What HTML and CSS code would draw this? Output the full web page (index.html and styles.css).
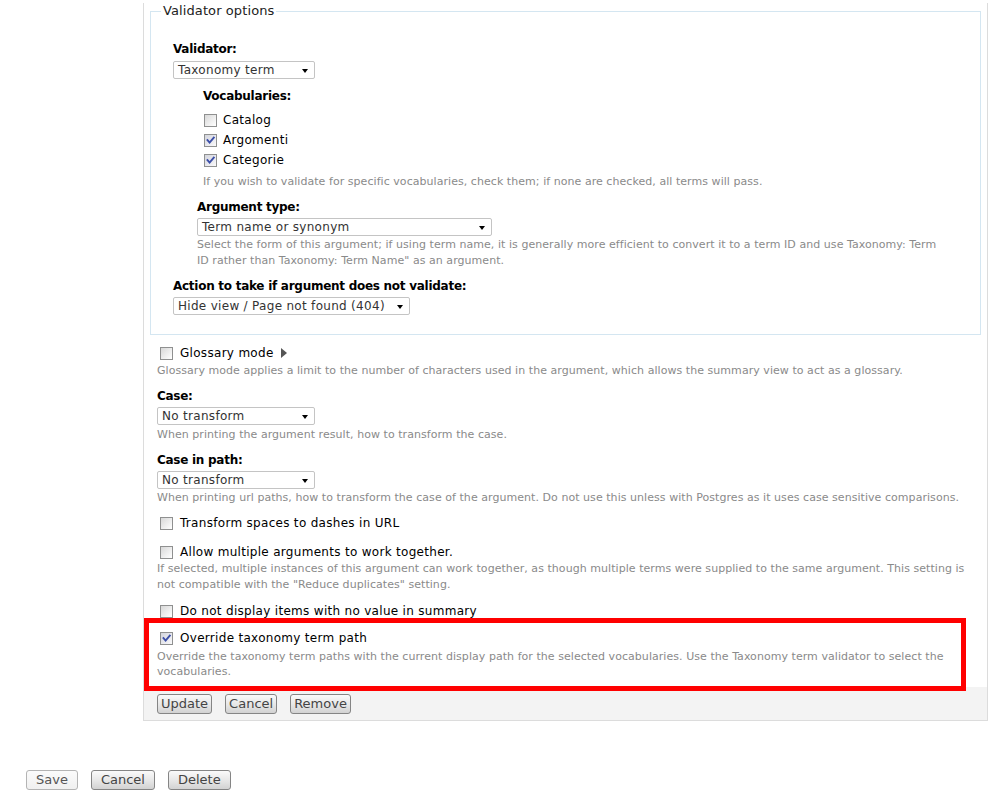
FILE: index.html
```html
<!DOCTYPE html>
<html lang="en">
<head>
<meta charset="utf-8">
<title>Argument options</title>
<link rel="stylesheet" href="styles.css">
</head>
<body>
<div class="panel">
  <div class="panel-body">
    <fieldset class="validator-fs">
      <legend>Validator options</legend>
      <div class="fs-body">
        <div class="form-item">
          <div class="label">Validator:</div>
          <div class="select w-validator"><span>Taxonomy term</span><i class="caret"></i></div>
        </div>
        <div class="vocab">
          <div class="label">Vocabularies:</div>
          <div class="cb-list">
            <div class="cb-row"><span class="cb"></span><span class="cb-label">Catalog</span></div>
            <div class="cb-row"><span class="cb checked"><svg viewBox="0 0 11 11" width="11" height="11"><path d="M2.5 5.2 L4.6 7.6 L8.8 2.6" /></svg></span><span class="cb-label">Argomenti</span></div>
            <div class="cb-row"><span class="cb checked"><svg viewBox="0 0 11 11" width="11" height="11"><path d="M2.5 5.2 L4.6 7.6 L8.8 2.6" /></svg></span><span class="cb-label">Categorie</span></div>
          </div>
          <div class="desc vocab-desc">If you wish to validate for specific vocabularies, check them; if none are checked, all terms will pass.</div>
        </div>
        <div class="argtype">
          <div class="label">Argument type:</div>
          <div class="select w-argtype"><span>Term name or synonym</span><i class="caret"></i></div>
          <div class="desc argtype-desc">Select the form of this argument; if using term name, it is generally more efficient to convert it to a term ID and use Taxonomy: Term ID rather than Taxonomy: Term Name" as an argument.</div>
        </div>
        <div class="form-item action">
          <div class="label">Action to take if argument does not validate:</div>
          <div class="select w-action"><span>Hide view / Page not found (404)</span><i class="caret"></i></div>
        </div>
      </div>
    </fieldset>

    <div class="options">
      <div class="cb-item glossary">
        <div class="cb-row"><span class="cb"></span><span class="cb-label">Glossary mode</span><i class="expand"></i></div>
        <div class="desc">Glossary mode applies a limit to the number of characters used in the argument, which allows the summary view to act as a glossary.</div>
      </div>
      <div class="sel-item case">
        <div class="label">Case:</div>
        <div class="select w-case"><span>No transform</span><i class="caret"></i></div>
        <div class="desc">When printing the argument result, how to transform the case.</div>
      </div>
      <div class="sel-item casepath">
        <div class="label">Case in path:</div>
        <div class="select w-case"><span>No transform</span><i class="caret"></i></div>
        <div class="desc">When printing url paths, how to transform the case of the argument. Do not use this unless with Postgres as it uses case sensitive comparisons.</div>
      </div>
      <div class="cb-item transform">
        <div class="cb-row"><span class="cb"></span><span class="cb-label">Transform spaces to dashes in URL</span></div>
      </div>
      <div class="cb-item multiple">
        <div class="cb-row"><span class="cb"></span><span class="cb-label">Allow multiple arguments to work together.</span></div>
        <div class="desc">If selected, multiple instances of this argument can work together, as though multiple terms were supplied to the same argument. This setting is not compatible with the "Reduce duplicates" setting.</div>
      </div>
      <div class="cb-item novalue">
        <div class="cb-row"><span class="cb"></span><span class="cb-label">Do not display items with no value in summary</span></div>
      </div>
      <div class="cb-item override">
        <div class="highlight"></div>
        <div class="cb-row"><span class="cb checked"><svg viewBox="0 0 11 11" width="11" height="11"><path d="M2.5 5.2 L4.6 7.6 L8.8 2.6" /></svg></span><span class="cb-label">Override taxonomy term path</span></div>
        <div class="desc tight">Override the taxonomy term paths with the current display path for the selected vocabularies. Use the Taxonomy term validator to select the vocabularies.</div>
      </div>
    </div>
  </div>
  <div class="panel-actions">
    <button class="btn small">Update</button>
    <button class="btn small">Cancel</button>
    <button class="btn small">Remove</button>
  </div>
</div>

<div class="page-actions">
  <button class="btn big light">Save</button>
  <button class="btn big">Cancel</button>
  <button class="btn big">Delete</button>
</div>
</body>
</html>
```

FILE: styles.css
```css
* { box-sizing: border-box; }

body {
  margin: 0;
  font-family: "DejaVu Sans", Verdana, sans-serif;
  font-size: 12px;
  color: #000;
  background: #fff;
}

.panel {
  margin-left: 143px;
  width: 845px;
  border: 1px solid #dcdcdc;
  border-top: 0;
  background: #fff;
}

.panel-body {
  padding: 0 6px;
}

/* fieldset */
.validator-fs {
  margin: 3px 0 0 0;
  padding: 0;
  border: 1px solid #d4e6f1;
  min-width: 0;
}

.validator-fs legend {
  margin-left: 10px;
  padding: 0 2px;
  font-size: 13px;
  line-height: 16px;
  color: #222;
  letter-spacing: 0.1px;
}

.fs-body {
  padding: 22px 32px 19px 22px;
}

.label {
  font-weight: bold;
  line-height: 16px;
  font-size: 12px;
  letter-spacing: -0.27px;
}

.select {
  display: flex;
  align-items: center;
  justify-content: space-between;
  height: 18px;
  margin-top: 4px;
  padding: 0 6px 0 4px;
  border: 1px solid #c4c4c4;
  border-radius: 2px;
  background: #fff;
  color: #333;
  font-size: 12px;
  line-height: 16px;
  letter-spacing: 0.3px;
  white-space: nowrap;
}

.caret {
  width: 0;
  height: 0;
  border-left: 3px solid transparent;
  border-right: 3px solid transparent;
  border-top: 4px solid #000;
  margin-top: 1px;
}

.w-validator { width: 142px; }
.w-argtype { width: 295px; margin-top: 3px; }
.w-action { width: 237px; margin-top: 3px; }
.w-case { width: 158px; margin-top: 3px; }

.desc {
  color: #8a8a8a;
  font-size: 11px;
  letter-spacing: 0.05px;
  line-height: 16px;
}

.desc.tight { line-height: 15px; margin-top: 3px; }

.vocab {
  margin: 9px 0 0 30px;
}

.cb-list {
  margin-top: 6px;
}

.cb-row {
  display: flex;
  align-items: center;
  height: 20px;
}

.cb {
  flex: none;
  width: 13px;
  height: 13px;
  margin-left: 1px;
  margin-right: 6px;
  border: 1px solid #8f9090;
  background: linear-gradient(135deg, #d8d8d8 0%, #f4f4f4 70%, #fff 100%);
  display: flex;
  align-items: center;
  justify-content: center;
}

.cb.checked {
  background: linear-gradient(135deg, #d2d4dc 0%, #eeeef2 70%, #fafafa 100%);
}

.cb svg path {
  fill: none;
  stroke: #3c4fa8;
  stroke-width: 1.9;
  stroke-linecap: square;
}

.cb-label {
  line-height: 16px;
  letter-spacing: 0.3px;
}

.vocab-desc {
  margin-top: 4px;
}

.argtype {
  margin: 9px 0 0 24px;
}

.argtype-desc {
  margin-top: 1px;
}

.action {
  margin-top: 9px;
}

/* items below fieldset */
.options {
  padding: 0 5px 8px 7px;
}

.options .cb-row {
  height: 16px;
}

.options .cb {
  margin-left: 3px;
  margin-right: 7px;
}

.glossary { margin-top: 10px; }
.glossary .desc { margin-top: 2px; }

.expand {
  width: 0;
  height: 0;
  margin-left: 7px;
  border-left: 6px solid #555;
  border-top: 5px solid transparent;
  border-bottom: 5px solid transparent;
}

.sel-item { margin-top: 9px; }
.sel-item .desc { margin-top: 2px; }
.casepath .desc { margin-top: 1px; }

.transform { margin-top: 9px; }
.multiple { margin-top: 13px; }
.multiple .desc { margin-top: 1px; }
.novalue { margin-top: 10px; }

.override {
  position: relative;
  margin-top: 11px;
}

.highlight {
  position: absolute;
  left: -13px;
  top: -12px;
  width: 822px;
  height: 73px;
  border: 5px solid #ff0000;
  z-index: 2;
  pointer-events: none;
}

/* buttons */
.panel-actions {
  display: flex;
  gap: 13px;
  padding: 7px 13px 6px;
  background: #f3f3f3;
}

.page-actions {
  display: flex;
  gap: 13px;
  margin-top: 49px;
  padding-left: 26px;
}

.btn {
  font-family: "DejaVu Sans", Verdana, sans-serif;
  font-size: 13px;
  line-height: 18px;
  height: 20px;
  color: #444;
  border: 1px solid #858585;
  border-radius: 3px;
  background: linear-gradient(#fafafa, #e6e6e6 55%, #d2d2d2);
  margin: 0;
}

.btn.small { padding: 0 3px; }
.btn.big { padding: 0 9px; }

.btn.light {
  border-color: #b4b4b4;
  background: linear-gradient(#fbfbfb, #f0f0f0);
  color: #555;
}
```
